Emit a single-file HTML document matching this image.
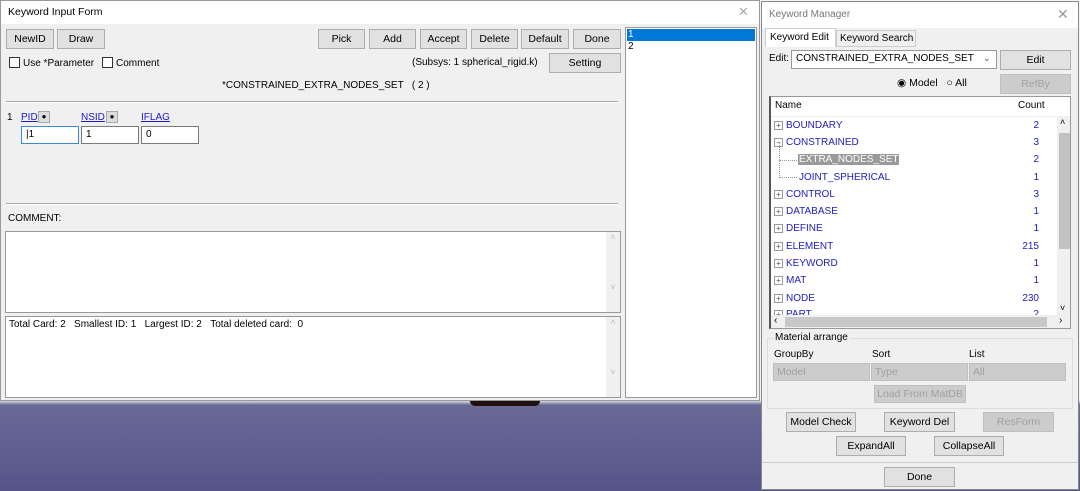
<!DOCTYPE html>
<html><head><style>
*{margin:0;padding:0;box-sizing:border-box}
body{width:1080px;height:491px;position:relative;overflow:hidden;background:linear-gradient(#f4f4f4 0,#f4f4f4 400px,#6a6a98 405px,#55558a 491px);font-family:"Liberation Sans",sans-serif;font-size:10px;color:#000;white-space:nowrap}
.a{position:absolute}
.btn{position:absolute;background:#e1e1e1;border:1px solid #adadad;text-align:center;line-height:18px;font-size:10.5px}
.dis{color:#a0a0a0;background:#cccccc;border-color:#bfbfbf}
.lnk{color:#1a1ad0;text-decoration:underline}
.inp{position:absolute;background:#fff;border:1px solid #7a7a7a;height:18px;line-height:16px;padding-left:4px}
.cb{display:inline-block;width:11px;height:11px;border:1px solid #333;background:#fff;vertical-align:-2px;margin-right:3px}
.t{position:absolute;left:0;width:100%;height:17px;line-height:17px;color:#2020c0}
.t .n{position:absolute;right:31px;color:#2020c0}
.pl{position:absolute;left:3px;top:4px;width:9px;height:9px;border:1px solid #999;font-size:8px;line-height:7px;text-align:center;color:#555;background:#fff}
</style></head><body>
<div class="a" style="left:0;top:0;width:760px;height:401px;background:#f0f0f0;border:1px solid #999"></div>
<div class="a" style="top:1px;left:1px;width:758px;height:23px;background:#fff"></div>
<div class="a" style="left:8px;top:6px;font-size:10.5px">Keyword Input Form</div>
<div class="a" style="left:738px;top:4px;color:#aaa;font-size:13px">✕</div>
<div class="btn" style="left:6px;top:29px;width:48px;height:20px">NewID</div>
<div class="btn" style="left:57px;top:29px;width:48px;height:20px">Draw</div>
<div class="btn" style="left:318px;top:29px;width:47px;height:20px">Pick</div>
<div class="btn" style="left:369px;top:29px;width:47px;height:20px">Add</div>
<div class="btn" style="left:420px;top:29px;width:47px;height:20px">Accept</div>
<div class="btn" style="left:471px;top:29px;width:47px;height:20px">Delete</div>
<div class="btn" style="left:521px;top:29px;width:48px;height:20px">Default</div>
<div class="btn" style="left:573px;top:29px;width:48px;height:20px">Done</div>
<div class="a" style="left:9px;top:57px"><span class="cb"></span>Use *Parameter</div>
<div class="a" style="left:102px;top:57px"><span class="cb"></span>Comment</div>
<div class="a" style="left:412px;top:57px">(Subsys: 1 spherical_rigid.k)</div>
<div class="btn" style="left:549px;top:53px;width:72px;height:20px">Setting</div>
<div class="a" style="left:222px;top:80px">*CONSTRAINED_EXTRA_NODES_SET &nbsp;&nbsp;( 2 )</div>
<div class="a" style="left:6px;top:101px;width:612px;height:2px;border-top:1px solid #aaa;border-bottom:1px solid #fff"></div>
<div class="a" style="left:7px;top:112px">1</div>
<div class="a lnk" style="left:21px;top:112px">PID</div>
<div class="a" style="left:38px;top:111px;width:12px;height:12px;background:#ddd;border:1px solid #aaa;font-size:8px;line-height:10px;text-align:center">●</div>
<div class="a lnk" style="left:81px;top:112px">NSID</div>
<div class="a" style="left:106px;top:111px;width:12px;height:12px;background:#ddd;border:1px solid #aaa;font-size:8px;line-height:10px;text-align:center">●</div>
<div class="a lnk" style="left:141px;top:112px">IFLAG</div>
<div class="inp" style="left:21px;top:126px;width:58px;border-color:#3c8ad8">|1</div>
<div class="inp" style="left:81px;top:126px;width:58px">1</div>
<div class="inp" style="left:141px;top:126px;width:58px">0</div>
<div class="a" style="left:6px;top:203px;width:612px;height:2px;border-top:1px solid #aaa;border-bottom:1px solid #fff"></div>
<div class="a" style="left:8px;top:213px">COMMENT:</div>
<div class="a" style="left:5px;top:231px;width:616px;height:82px;background:#fff;border:1px solid #999"></div>
<div class="a" style="left:606px;top:232px;width:14px;height:80px;background:#f0f0f0;color:#bbb;font-size:9px;text-align:center">˄<br><br><br><br><br>˅</div>
<div class="a" style="left:5px;top:316px;width:616px;height:82px;background:#fff;border:1px solid #999"></div>
<div class="a" style="left:606px;top:317px;width:14px;height:80px;background:#f0f0f0;color:#bbb;font-size:9px;text-align:center">˄<br><br><br><br><br>˅</div>
<div class="a" style="left:9px;top:319px;font-size:10px">Total Card: 2 &nbsp;&nbsp;Smallest ID: 1 &nbsp;&nbsp;Largest ID: 2 &nbsp;&nbsp;Total deleted card: &nbsp;0</div>
<div class="a" style="left:625px;top:27px;width:132px;height:371px;background:#fff;border:1px solid #999"></div>
<div class="a" style="left:627px;top:29px;width:128px;height:12px;background:#0078d7;color:#fff;line-height:12px;padding-left:1px">1</div>
<div class="a" style="left:628px;top:41px;line-height:12px">2</div>
<div class="a" style="left:470px;top:401px;width:70px;height:5px;background:#201010;border-radius:0 0 35px 35px"></div>
<div class="a" style="left:761px;top:1px;width:318px;height:489px;background:#f0f0f0;border:1px solid #888"></div>
<div class="a" style="left:762px;top:2px;width:316px;height:26px;background:#fff"></div>
<div class="a" style="left:769px;top:9px;color:#777">Keyword Manager</div>
<div class="a" style="left:1057px;top:6px;color:#999;font-size:14px">✕</div>
<div class="a" style="left:765px;top:28px;width:71px;height:19px;background:#fff;border:1px solid #ccc;border-bottom:none;padding:3px 0 0 4px">Keyword Edit</div>
<div class="a" style="left:836px;top:30px;width:80px;height:17px;border:1px solid #ccc;background:#f0f0f0;padding:2px 0 0 3px">Keyword Search</div>
<div class="a" style="left:769px;top:53px">Edit:</div>
<div class="a" style="left:791px;top:50px;width:206px;height:19px;background:#fff;border:1px solid #999;padding:2px 4px">CONSTRAINED_EXTRA_NODES_SET<span style="position:absolute;right:5px;color:#666">⌄</span></div>
<div class="btn" style="left:1000px;top:50px;width:71px;height:20px">Edit</div>
<div class="a" style="left:897px;top:77px;font-size:10.5px">◉ Model &nbsp;&nbsp;○ All</div>
<div class="btn dis" style="left:1000px;top:74px;width:71px;height:20px">RefBy</div>
<div class="a" style="left:769px;top:96px;width:302px;height:233px;background:#fff;border:1px solid #999;border-left:2px solid #555;overflow:hidden">
<div class="a" style="left:4px;top:3px">Name</div><div class="a" style="left:247px;top:3px">Count</div>
<div class="a" style="left:0;top:19px;width:300px;border-top:1px solid #eee"></div>
<div class="t" style="top:20px"><span class="pl">+</span><span style="margin-left:15px">BOUNDARY</span><span class="n">2</span></div>
<div class="t" style="top:37px"><span class="pl">−</span><span style="margin-left:15px">CONSTRAINED</span><span class="n">3</span></div>
<div class="a" style="left:8px;top:46px;width:1px;height:35px;border-left:1px dotted #999"></div>
<div class="a" style="left:8px;top:63px;width:18px;border-top:1px dotted #999"></div>
<div class="a" style="left:8px;top:80px;width:18px;border-top:1px dotted #999"></div>
<div class="t" style="top:54px"><span style="margin-left:27px;background:#9a9a9a;color:#fff;padding:0 1px">EXTRA_NODES_SET</span><span class="n">2</span></div>
<div class="t" style="top:72px"><span style="margin-left:28px">JOINT_SPHERICAL</span><span class="n">1</span></div>
<div class="t" style="top:89px"><span class="pl">+</span><span style="margin-left:15px">CONTROL</span><span class="n">3</span></div>
<div class="t" style="top:106px"><span class="pl">+</span><span style="margin-left:15px">DATABASE</span><span class="n">1</span></div>
<div class="t" style="top:123px"><span class="pl">+</span><span style="margin-left:15px">DEFINE</span><span class="n">1</span></div>
<div class="t" style="top:141px"><span class="pl">+</span><span style="margin-left:15px">ELEMENT</span><span class="n">215</span></div>
<div class="t" style="top:158px"><span class="pl">+</span><span style="margin-left:15px">KEYWORD</span><span class="n">1</span></div>
<div class="t" style="top:175px"><span class="pl">+</span><span style="margin-left:15px">MAT</span><span class="n">1</span></div>
<div class="t" style="top:193px"><span class="pl">+</span><span style="margin-left:15px">NODE</span><span class="n">230</span></div>
<div class="t" style="top:209px"><span class="pl">+</span><span style="margin-left:15px">PART</span><span class="n">2</span></div>
<div class="a" style="left:286px;top:20px;width:14px;height:198px;background:#f0f0f0"><div style="position:absolute;left:2px;top:16px;width:11px;height:116px;background:#c2c2c2"></div><div style="position:absolute;left:3px;top:0;font-size:9px">˄</div><div style="position:absolute;left:3px;top:186px;font-size:9px">˅</div></div>
<div class="a" style="left:0;top:218px;width:300px;height:14px;background:#f0f0f0"><div style="position:absolute;left:14px;top:2px;width:262px;height:10px;background:#c8c8c8"></div><span style="position:absolute;left:3px;top:0">‹</span><span style="position:absolute;left:288px;top:0">›</span></div>
</div>
<div class="a" style="left:767px;top:338px;width:306px;height:71px;border:1px solid #ddd"></div>
<div class="a" style="left:773px;top:332px;background:#f0f0f0;padding:0 2px">Material arrange</div>
<div class="a" style="left:774px;top:349px">GroupBy</div>
<div class="a" style="left:872px;top:349px">Sort</div>
<div class="a" style="left:969px;top:349px">List</div>
<div class="btn dis" style="left:773px;top:363px;width:97px;height:18px;line-height:16px;text-align:left;padding-left:3px">Model</div>
<div class="btn dis" style="left:871px;top:363px;width:97px;height:18px;line-height:16px;text-align:left;padding-left:3px">Type</div>
<div class="btn dis" style="left:969px;top:363px;width:97px;height:18px;line-height:16px;text-align:left;padding-left:3px">All</div>
<div class="btn dis" style="left:874px;top:385px;width:92px;height:18px;line-height:16px">Load From MatDB</div>
<div class="btn" style="left:786px;top:412px;width:70px;height:20px">Model Check</div>
<div class="btn" style="left:884px;top:412px;width:71px;height:20px">Keyword Del</div>
<div class="btn dis" style="left:983px;top:412px;width:71px;height:20px">ResForm</div>
<div class="btn" style="left:836px;top:436px;width:70px;height:20px">ExpandAll</div>
<div class="btn" style="left:934px;top:436px;width:70px;height:20px">CollapseAll</div>
<div class="a" style="left:762px;top:462px;width:316px;border-top:1px solid #ccc"></div>
<div class="btn" style="left:884px;top:467px;width:71px;height:20px">Done</div>
</body></html>
